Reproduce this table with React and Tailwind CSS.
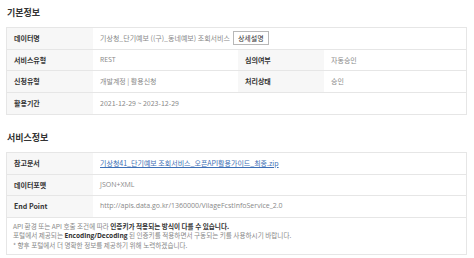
import React from 'react';

const font = { fontFamily: '"Noto Sans CJK KR", "Noto Sans", sans-serif' };
const latin = { fontFamily: '"Open Sans", "Noto Sans CJK KR", sans-serif' };

function Label({ children }) {
  return (
    <div className="w-[86px] shrink-0 bg-[#f7f7f7] pl-[7px] flex items-center text-[7px] font-bold text-[#333]">
      {children}
    </div>
  );
}

function Value({ children, className = '', style }) {
  return (
    <div className={`flex-1 pl-[7px] flex items-center text-[7px] text-[#888] ${className}`} style={style}>
      {children}
    </div>
  );
}

function Row({ children, last }) {
  return (
    <div className={`flex h-[21.5px] ${last ? '' : 'border-b border-[#e6e6e6]'}`}>
      {children}
    </div>
  );
}

export default function App() {
  return (
    <div className="w-[474px] h-[258px] bg-white overflow-hidden px-[6px] pt-[7px]" style={font}>
      <div className="w-[461px]">
        {/* 기본정보 */}
        <h2 className="h-[12px] leading-[12px] text-[9px] font-semibold text-[#333] pl-px mb-[8px]">기본정보</h2>
        <div className="border border-[#e6e6e6]">
          <Row>
            <Label>데이터명</Label>
            <Value className="text-[7.1px]">
              기상청_단기예보 ((구)_동네예보) 조회서비스
              <span className="ml-[3px] h-[14px] px-[4px] flex items-center border border-[#b8b8b8] bg-white text-[#333] text-[7px]">
                상세설명
              </span>
            </Value>
          </Row>
          <Row>
            <Label>서비스유형</Label>
            <div className="w-[145px] pl-[7px] flex items-center text-[6.5px] text-[#888]">REST</div>
            <Label>심의여부</Label>
            <Value>자동승인</Value>
          </Row>
          <Row>
            <Label>신청유형</Label>
            <div className="w-[145px] pl-[7px] flex items-center text-[7px] text-[#888]">개발계정 | 활용신청</div>
            <Label>처리상태</Label>
            <Value>승인</Value>
          </Row>
          <Row last>
            <Label>활용기간</Label>
            <Value>2021-12-29 ~ 2023-12-29</Value>
          </Row>
        </div>

        {/* 서비스정보 */}
        <h2 className="h-[12px] leading-[12px] text-[9px] font-semibold text-[#333] pl-px mt-[17px] mb-[8px]">서비스정보</h2>
        <div className="border border-[#e6e6e6]">
          <Row>
            <Label>참고문서</Label>
            <Value>
              <a href="#" className="text-[#3d6fb5] underline">기상청41_단기예보 조회서비스_오픈API활용가이드_최종.zip</a>
            </Value>
          </Row>
          <Row>
            <Label>데이터포맷</Label>
            <Value className="text-[6.5px]" style={latin}>JSON+XML</Value>
          </Row>
          <Row>
            <Label>End Point</Label>
            <Value className="text-[6.6px]" style={latin}>http://apis.data.go.kr/1360000/VilageFcstInfoService_2.0</Value>
          </Row>
          <div className="pl-[6px] pt-[4px] pb-[4px] text-[6.6px] leading-[9.5px] text-[#888]">
            <p>
              API 환경 또는 API 호출 조건에 따라 <b className="text-[#333] font-bold">인증키가 적용되는 방식이 다를 수 있습니다.</b>
            </p>
            <p>
              포털에서 제공되는 <b className="text-[#333] font-bold" style={latin}>Encoding/Decoding</b> 된 인증키를 적용하면서 구동되는 키를 사용하시기 바랍니다.
            </p>
            <p>* 향후 포털에서 더 명확한 정보를 제공하기 위해 노력하겠습니다.</p>
          </div>
        </div>
      </div>
    </div>
  );
}
